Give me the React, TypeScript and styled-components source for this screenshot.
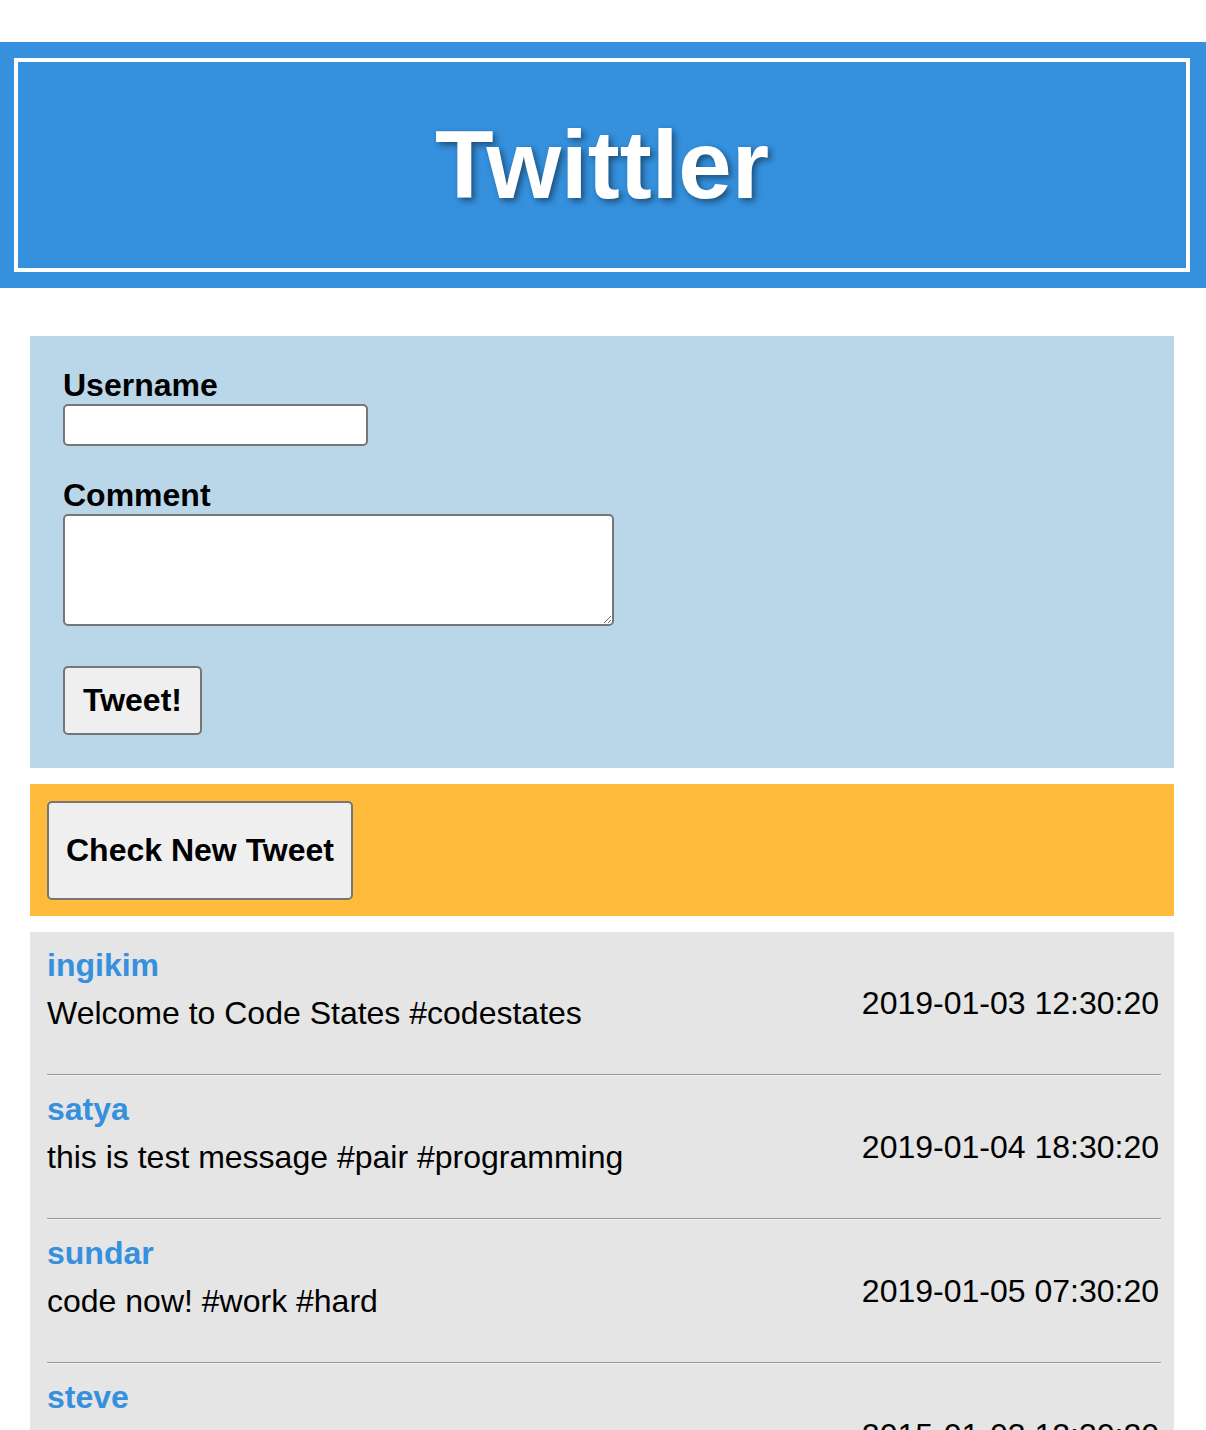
import React from "react";
import styled, { createGlobalStyle } from "styled-components";

const GlobalStyle = createGlobalStyle`
  body {
    margin: 0;
    background: #ffffff;
    font-family: "Liberation Sans", Arial, Helvetica, sans-serif;
    font-size: 32px;
    color: #000000;
  }
  * {
    box-sizing: border-box;
  }
`;

const Header = styled.header`
  margin-top: 42px;
  padding: 16px 16px 16px 14px;
  background: #3590dd;
`;

const TitleFrame = styled.div`
  height: 214px;
  border: 4px solid #ffffff;
  display: flex;
  align-items: center;
  justify-content: center;
`;

const Title = styled.h1`
  margin: 0;
  font-size: 96px;
  font-weight: 700;
  color: #ffffff;
  text-shadow: 3px 3px 6px rgba(0, 0, 0, 0.45);
`;

const Main = styled.main`
  margin: 48px 32px 0 30px;
  display: flex;
  flex-direction: column;
  gap: 16px;
`;

const TweetForm = styled.form`
  background: #bad7e9;
  padding: 30px 0 33px 33px;
  display: flex;
  flex-direction: column;
  align-items: flex-start;
`;

const Field = styled.div<{ $gap: number }>`
  display: flex;
  flex-direction: column;
  margin-bottom: ${(p) => p.$gap}px;
`;

const Label = styled.label`
  font-weight: 700;
  line-height: 38px;
`;

const TextInput = styled.input`
  width: 305px;
  height: 42px;
  border: 2px solid #767676;
  border-radius: 5px;
  background: #ffffff;
  font: inherit;
  padding: 0 4px;
`;

const TextArea = styled.textarea`
  display: block;
  width: 551px;
  height: 112px;
  border: 2px solid #767676;
  border-radius: 5px;
  background: #ffffff;
  font: inherit;
  padding: 4px;
`;

const Button = styled.button<{ $pad: string }>`
  font-family: inherit;
  font-size: 32px;
  font-weight: 700;
  line-height: 37px;
  color: #000000;
  background: #efefef;
  border: 2px solid #767676;
  border-radius: 5px;
  padding: ${(p) => p.$pad};
  cursor: pointer;
`;

const Toolbar = styled.section`
  background: #ffbb3b;
  padding: 17px 17px 16px;
`;

const TweetList = styled.ul`
  list-style: none;
  margin: 0;
  padding: 0 13px 0 17px;
  background: #e5e5e5;
`;

const TweetItem = styled.li`
  display: flex;
  align-items: center;
  justify-content: space-between;
  min-height: 142px;
`;

const TweetBody = styled.div`
  display: flex;
  flex-direction: column;
  gap: 11px;
  padding: 15px 0 42px;
  line-height: 37px;
`;

const Username = styled.span`
  font-weight: 700;
  color: #3590dd;
`;

const Message = styled.span``;

const CreatedAt = styled.span`
  line-height: 37px;
  padding-right: 2px;
`;

const Divider = styled.hr`
  margin: 0;
  height: 0;
  border: 0;
  border-top: 1px solid #999999;
  border-bottom: 1px solid #f0f0f0;
`;

const tweets = [
  { user: "ingikim", message: "Welcome to Code States #codestates", createdAt: "2019-01-03 12:30:20" },
  { user: "satya", message: "this is test message #pair #programming", createdAt: "2019-01-04 18:30:20" },
  { user: "sundar", message: "code now! #work #hard", createdAt: "2019-01-05 07:30:20" },
  { user: "steve", message: "Stay hungry, and stay foolish!", createdAt: "2015-01-03 12:30:20" },
  { user: "tim", message: "education for everyone", createdAt: "2019-01-04 11:30:20" },
];

export default function App() {
  return (
    <>
      <GlobalStyle />
      <Header>
        <TitleFrame>
          <Title>Twittler</Title>
        </TitleFrame>
      </Header>

      <Main>
        <TweetForm onSubmit={(e) => e.preventDefault()}>
          <Field $gap={30}>
            <Label htmlFor="username">Username</Label>
            <TextInput id="username" type="text" />
          </Field>
          <Field $gap={40}>
            <Label htmlFor="comment">Comment</Label>
            <TextArea id="comment" />
          </Field>
          <Button type="submit" $pad="14px 18px">Tweet!</Button>
        </TweetForm>

        <Toolbar>
          <Button type="button" $pad="29px 17px">Check New Tweet</Button>
        </Toolbar>

        <TweetList>
          {tweets.map((t, i) => (
            <React.Fragment key={t.user}>
              <TweetItem>
                <TweetBody>
                  <Username>{t.user}</Username>
                  <Message>{t.message}</Message>
                </TweetBody>
                <CreatedAt>{t.createdAt}</CreatedAt>
              </TweetItem>
              {i < tweets.length - 1 && <Divider />}
            </React.Fragment>
          ))}
        </TweetList>
      </Main>
    </>
  );
}
